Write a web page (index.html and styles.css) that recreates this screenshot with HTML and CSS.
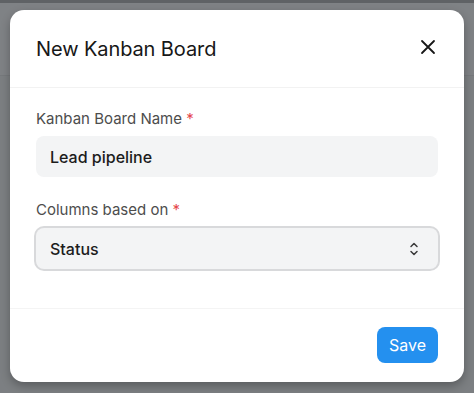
FILE: index.html
```html
<!DOCTYPE html>
<html lang="en">
<head>
<meta charset="utf-8">
<title>New Kanban Board</title>
<link rel="stylesheet" href="styles.css">
</head>
<body>
<div class="overlay">
  <div class="modal">
    <div class="modal-header">
      <h2 class="modal-title">New Kanban Board</h2>
      <button class="close-btn" aria-label="Close">
        <svg width="16" height="16" viewBox="0 0 16 16" fill="none" stroke="currentColor" stroke-width="1.8" stroke-linecap="round">
          <path d="M2 2 L14 14 M14 2 L2 14"/>
        </svg>
      </button>
    </div>
    <div class="modal-body">
      <div class="field">
        <label class="field-label">Kanban Board Name <span class="req">*</span></label>
        <div class="input">Lead pipeline</div>
      </div>
      <div class="field">
        <label class="field-label">Columns based on <span class="req">*</span></label>
        <div class="input select">
          <span>Status</span>
          <svg class="chev" width="10" height="16" viewBox="0 0 10 16" fill="none" stroke="currentColor" stroke-width="1.5" stroke-linecap="round" stroke-linejoin="round">
            <path d="M2 5.5 L5 2.5 L8 5.5"/>
            <path d="M2 10.5 L5 13.5 L8 10.5"/>
          </svg>
        </div>
      </div>
    </div>
    <div class="modal-footer">
      <button class="btn-primary">Save</button>
    </div>
  </div>
</div>
</body>
</html>
```
FILE: styles.css
```css
* { box-sizing: border-box; }
html, body { margin: 0; padding: 0; }
body {
  width: 474px;
  height: 393px;
  overflow: hidden;
  font-family: "Inter", "Liberation Sans", sans-serif;
  background: linear-gradient(to bottom, #5f6265 0, #5f6265 3px, #7f8285 3px, #7f8285 75px, #76797c 75px, #76797c 76px, #7c7f82 76px);
}
.overlay {
  padding: 10px;
}
.modal {
  width: 454px;
  height: 372px;
  background: #ffffff;
  border-radius: 14px;
  box-shadow: 0 4px 10px rgba(0, 0, 0, 0.28);
  display: flex;
  flex-direction: column;
}
.modal-header {
  height: 78px;
  padding: 0 28px 0 26px;
  display: flex;
  align-items: center;
  justify-content: space-between;
  border-bottom: 1px solid #f2f2f2;
}
.modal-title {
  margin: 0;
  font-size: 20px;
  font-weight: 400;
  color: #171717;
  line-height: 24px;
  letter-spacing: -0.1px;
  padding-top: 1px;
}
.close-btn {
  border: 0;
  background: none;
  padding: 0;
  width: 16px;
  height: 16px;
  color: #171717;
  display: flex;
  margin-top: -4px;
}
.modal-body {
  flex: 1;
  padding: 21px 26px 0 26px;
  border-bottom: 1px solid #f4f4f4;
  display: flex;
  flex-direction: column;
  gap: 23px;
}
.field {
  display: flex;
  flex-direction: column;
  gap: 7px;
}
.field-label {
  font-size: 15px;
  line-height: 20px;
  color: #4d4d4d;
}
.req { color: #e5484d; }
.input {
  height: 41px;
  border-radius: 8px;
  background: #f3f4f5;
  padding: 0 14px;
  display: flex;
  align-items: center;
  font-size: 16px;
  font-weight: 500;
  color: #1c1c1c;
}
.select {
  justify-content: space-between;
  margin-top: 1px;
  box-shadow: 0 0 0 2px #d8d9db;
  padding-right: 19px;
}
.chev { color: #3a3a3a; }
.modal-footer {
  height: 73px;
  padding: 18px 26px 0 26px;
  display: flex;
  justify-content: flex-end;
  align-items: flex-start;
}
.btn-primary {
  height: 36px;
  width: 61px;
  border: 0;
  border-radius: 8px;
  background: #2490ef;
  color: #ffffff;
  font-family: "Inter", "Liberation Sans", sans-serif;
  font-size: 16px;
  font-weight: 400;
  padding: 0;
}
```
